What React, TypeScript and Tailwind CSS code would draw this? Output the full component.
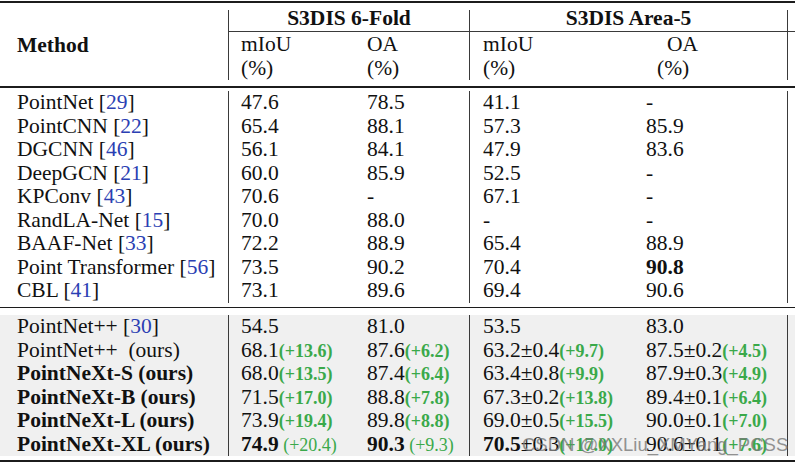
import type { ReactNode } from "react";

type Val = {
  v: string;
  bold?: boolean;
  pm?: string;
  inc?: string;
  loose?: boolean;
};

type Row = {
  name: string;
  cite?: string;
  bold?: boolean;
  cells: Val[];
};

const plain = (...vs: string[]): Val[] => vs.map((v) => ({ v }));

const baselines: Row[] = [
  { name: "PointNet", cite: "29", cells: plain("47.6", "78.5", "41.1", "-") },
  { name: "PointCNN", cite: "22", cells: plain("65.4", "88.1", "57.3", "85.9") },
  { name: "DGCNN", cite: "46", cells: plain("56.1", "84.1", "47.9", "83.6") },
  { name: "DeepGCN", cite: "21", cells: plain("60.0", "85.9", "52.5", "-") },
  { name: "KPConv", cite: "43", cells: plain("70.6", "-", "67.1", "-") },
  { name: "RandLA-Net", cite: "15", cells: plain("70.0", "88.0", "-", "-") },
  { name: "BAAF-Net", cite: "33", cells: plain("72.2", "88.9", "65.4", "88.9") },
  {
    name: "Point Transformer",
    cite: "56",
    cells: [{ v: "73.5" }, { v: "90.2" }, { v: "70.4" }, { v: "90.8", bold: true }],
  },
  { name: "CBL", cite: "41", cells: plain("73.1", "89.6", "69.4", "90.6") },
];

const ours: Row[] = [
  { name: "PointNet++", cite: "30", cells: plain("54.5", "81.0", "53.5", "83.0") },
  {
    name: "PointNet++  (ours)",
    cells: [
      { v: "68.1", inc: "+13.6" },
      { v: "87.6", inc: "+6.2" },
      { v: "63.2", pm: "0.4", inc: "+9.7" },
      { v: "87.5", pm: "0.2", inc: "+4.5" },
    ],
  },
  {
    name: "PointNeXt-S (ours)",
    bold: true,
    cells: [
      { v: "68.0", inc: "+13.5" },
      { v: "87.4", inc: "+6.4" },
      { v: "63.4", pm: "0.8", inc: "+9.9" },
      { v: "87.9", pm: "0.3", inc: "+4.9" },
    ],
  },
  {
    name: "PointNeXt-B (ours)",
    bold: true,
    cells: [
      { v: "71.5", inc: "+17.0" },
      { v: "88.8", inc: "+7.8" },
      { v: "67.3", pm: "0.2", inc: "+13.8" },
      { v: "89.4", pm: "0.1", inc: "+6.4" },
    ],
  },
  {
    name: "PointNeXt-L (ours)",
    bold: true,
    cells: [
      { v: "73.9", inc: "+19.4" },
      { v: "89.8", inc: "+8.8" },
      { v: "69.0", pm: "0.5", inc: "+15.5" },
      { v: "90.0", pm: "0.1", inc: "+7.0" },
    ],
  },
  {
    name: "PointNeXt-XL (ours)",
    bold: true,
    cells: [
      { v: "74.9", bold: true, inc: "+20.4", loose: true },
      { v: "90.3", bold: true, inc: "+9.3", loose: true },
      { v: "70.5", bold: true, pm: "0.3", inc: "+17.0" },
      { v: "90.6", pm: "0.1", inc: "+7.6" },
    ],
  },
];

const cols = "grid grid-cols-[228px_139px_102px_177px_141px_8px]";
const vline = "border-l border-[#3a3a3a]";

function Value({ c }: { c: Val }) {
  return (
    <span className="whitespace-pre">
      <span className={c.bold ? "font-bold" : ""}>{c.v}</span>
      {c.pm && <span>±{c.pm}</span>}
      {c.inc && (
        <span
          className={`text-[18px] leading-none text-[#3aa94a] ${
            c.loose ? "" : "font-bold"
          }`}
        >
          {c.loose ? " " : ""}({c.inc})
        </span>
      )}
    </span>
  );
}

function BodyRow({ row }: { row: Row }) {
  const [a, b, c, d] = row.cells;
  return (
    <div className={`${cols} h-[23.5px] leading-[23.5px]`}>
      <div className={`pl-[17px] whitespace-pre ${row.bold ? "font-bold" : ""}`}>
        {row.name}
        {row.cite && (
          <>
            {" "}[<span className="text-[#2b3fb3]">{row.cite}</span>]
          </>
        )}
      </div>
      <div className={`${vline} pl-[12px]`}>
        <Value c={a} />
      </div>
      <div>
        <Value c={b} />
      </div>
      <div className={`${vline} pl-[13px]`}>
        <Value c={c} />
      </div>
      <div>
        <Value c={d} />
      </div>
      <div className={vline} />
    </div>
  );
}

function Rule({ className }: { className: string }) {
  return <div className={`w-full bg-[#1c1c1c] ${className}`} />;
}

function HeadCell({ children, className }: { children?: ReactNode; className?: string }) {
  return <div className={className}>{children}</div>;
}

export default function App() {
  return (
    <div className="relative w-[795px] h-[463px] overflow-hidden bg-white text-[21.5px] text-[#111] font-['Liberation_Serif','Times_New_Roman',serif]">
      <div className="h-[1px]" />
      <Rule className="h-[2px]" />

      {/* header */}
      <div className="pt-[7px] pb-[6px]">
        <div className={`${cols} grid-rows-[21px_49px] h-[70px]`}>
          <HeadCell className="row-span-2 flex items-center pl-[17px] font-bold">
            Method
          </HeadCell>
          <HeadCell className={`${vline} col-span-2 text-center font-bold leading-[16px]`}>
            S3DIS 6-Fold
          </HeadCell>
          <HeadCell className={`${vline} col-span-2 text-center font-bold leading-[16px]`}>
            S3DIS Area-5
          </HeadCell>
          <HeadCell className={vline} />

          <HeadCell className={`${vline} border-t pl-[12px] leading-[24px]`}>
            <div>mIoU</div>
            <div>(%)</div>
          </HeadCell>
          <HeadCell className="border-t border-[#3a3a3a] leading-[24px]">
            <div>OA</div>
            <div>(%)</div>
          </HeadCell>
          <HeadCell className={`${vline} border-t pl-[13px] leading-[24px]`}>
            <div>mIoU</div>
            <div>(%)</div>
          </HeadCell>
          <HeadCell className="border-t border-[#3a3a3a] leading-[24px]">
            <div className="pl-[21px]">OA</div>
            <div className="pl-[11px]">(%)</div>
          </HeadCell>
          <HeadCell className={`${vline} border-t`} />
        </div>
      </div>

      <Rule className="h-[2px]" />

      <div className="pt-[3px]">
        {baselines.map((r) => (
          <BodyRow key={r.name} row={r} />
        ))}
      </div>

      <Rule className="mt-[4px] h-[1.5px]" />

      <div className="mt-[7px] bg-[#f0f0f0]">
        {ours.map((r) => (
          <BodyRow key={r.name} row={r} />
        ))}
      </div>

      <Rule className="mt-[4px] h-[2px]" />

      {/* watermark */}
      <div className="absolute left-[522px] top-[433px] text-[18.5px] leading-[24px] text-[#7a7a7a] opacity-80 font-['Liberation_Sans',Arial,sans-serif] whitespace-nowrap">
        CSDN @XXLiu_XMYang_PCSS
      </div>
    </div>
  );
}
